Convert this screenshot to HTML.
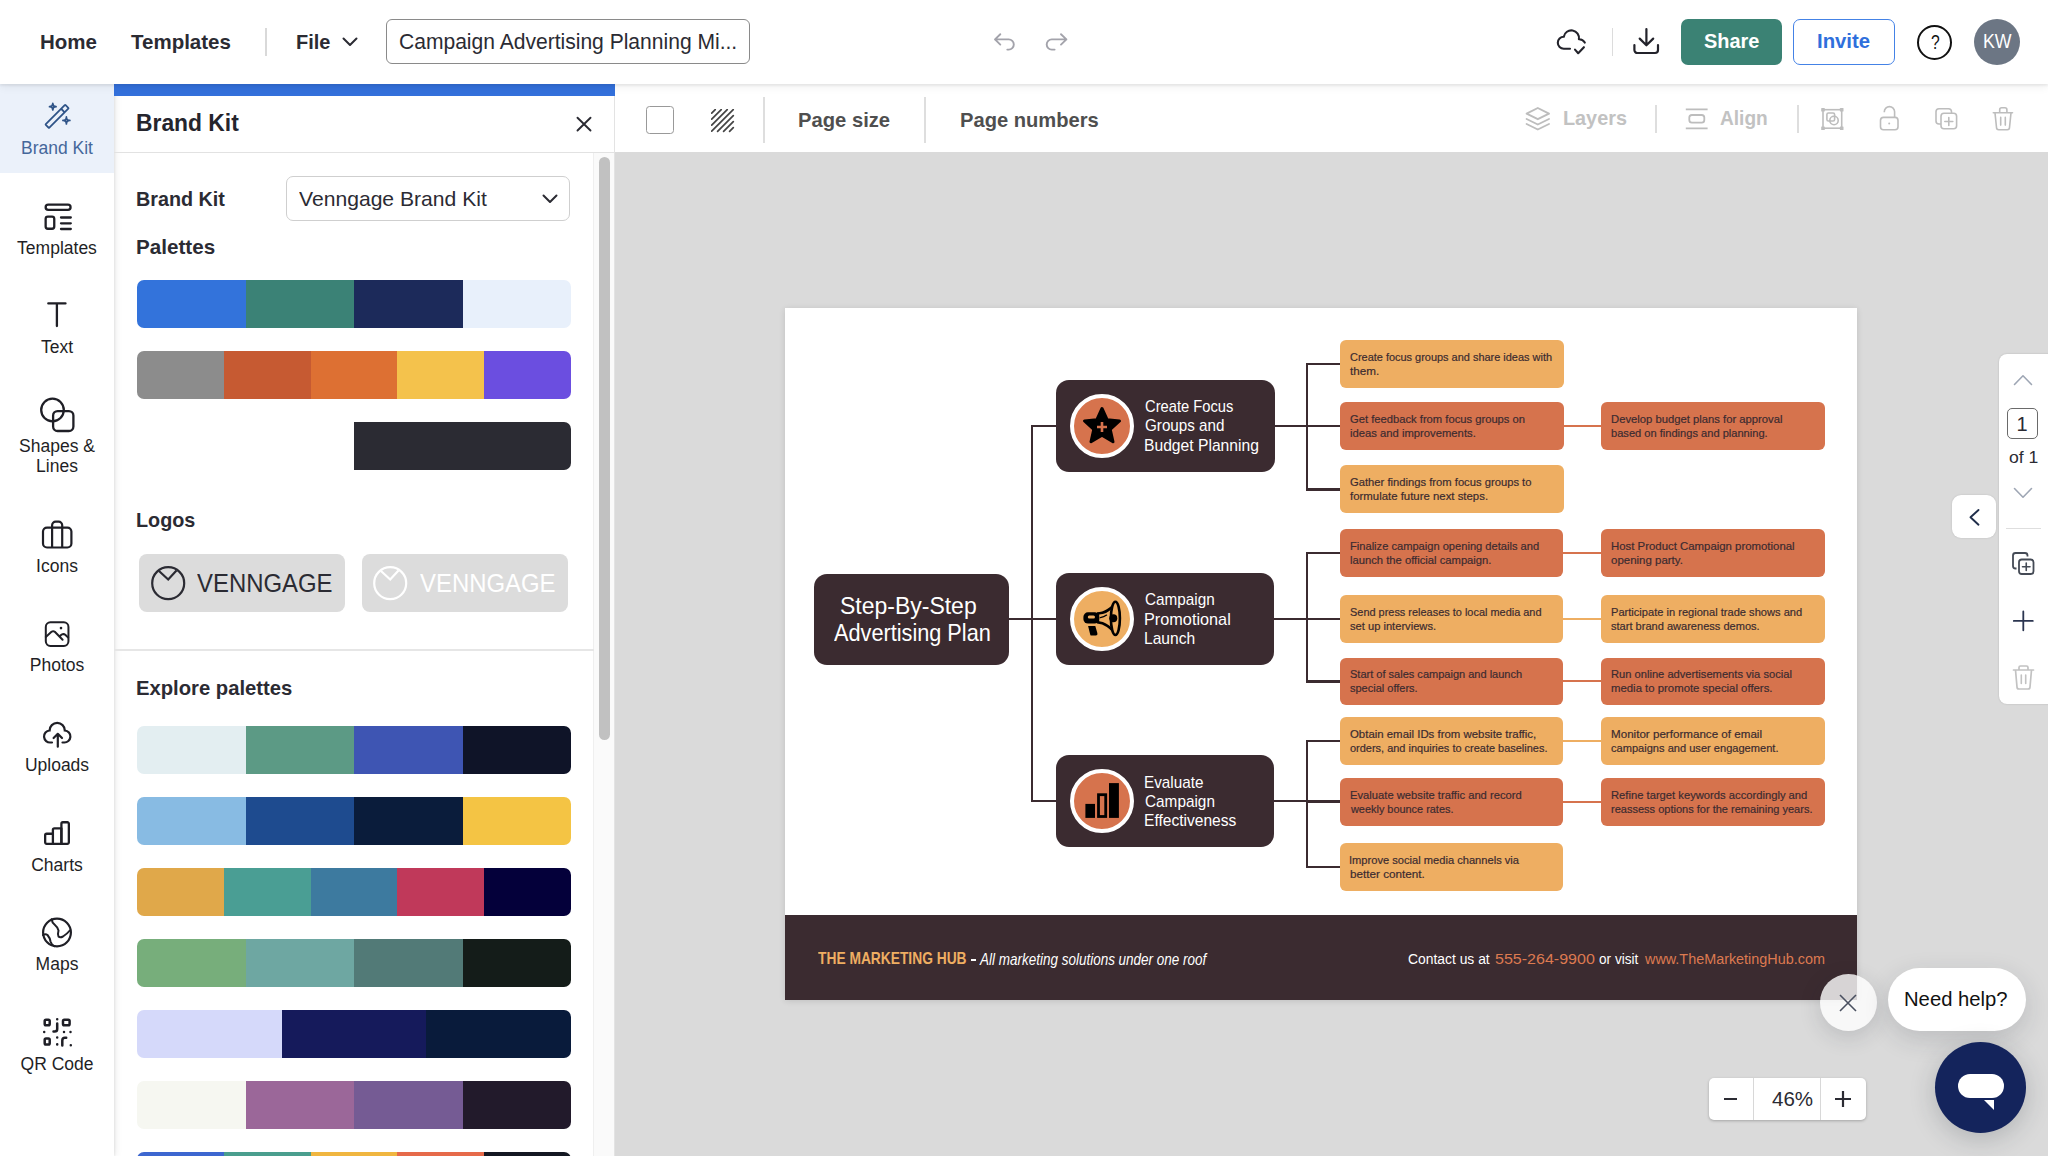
<!DOCTYPE html><html><head><meta charset="utf-8"><style>
html,body{margin:0;padding:0}
body{width:2048px;height:1156px;overflow:hidden;position:relative;background:#dadada;font-family:"Liberation Sans",sans-serif}
.a{position:absolute;box-sizing:border-box}
.t{position:absolute;white-space:nowrap}
</style></head><body>

<div class="a" style="left:0px;top:0px;width:2048px;height:84px;background:#fff;box-shadow:0 1.5px 2px rgba(0,0,0,0.06), 0 3px 9px rgba(0,0,0,0.06);z-index:5"></div>
<div class="a" style="left:0;top:0;width:2048px;height:84px;z-index:6">
<div class="t " style="left:40.0px;top:31.8px;font-size:20.5px;line-height:20.5px;color:#2b2b33;font-weight:700;font-style:normal;">Home</div>
<div class="t " style="left:131.0px;top:31.8px;font-size:20.5px;line-height:20.5px;color:#2b2b33;font-weight:700;font-style:normal;">Templates</div>
<div class="a" style="left:265px;top:28px;width:1.5px;height:28px;background:#d9d9d9;"></div>
<div class="t" style="left:296.03px;top:31.8px;font-size:20.5px;line-height:20.5px;color:#2b2b33;font-weight:700;font-style:normal;transform:scaleX(0.9731);transform-origin:0 0;">File</div>
<svg class="a" style="left:342px;top:37.3px;" width="16" height="10" viewBox="0 0 16 10" fill="none"><path d="M1.5 1.5 L8 8 L14.5 1.5" stroke="#2b2b33" stroke-width="2" stroke-linecap="round" stroke-linejoin="round"/></svg>
<div class="a" style="left:386px;top:19px;width:364px;height:45px;background:#fff;border:1.5px solid #8a8a8a;border-radius:6px"></div>
<div class="t" style="left:398.51px;top:31.4px;font-size:21.2px;line-height:21.2px;color:#2b2b33;font-weight:400;font-style:normal;transform:scaleX(0.9937);transform-origin:0 0;">Campaign Advertising Planning Mi...</div>
<svg class="a" style="left:985px;top:22px;" width="95" height="40" viewBox="0 0 95 40" fill="none"><path d="M15.3 12.2 L10 17.4 L15.3 22.6 M10 17.4 H23.7 A5.1 5.1 0 0 1 23.7 27.6 H22.3" stroke="#a3a3ab" stroke-width="1.9" stroke-linecap="round" stroke-linejoin="round" fill="none"/><path d="M76 12.2 L81.4 17.4 L76 22.6 M81.4 17.4 H66.8 A5.1 5.1 0 0 0 66.8 27.6 H69.6" stroke="#a3a3ab" stroke-width="1.9" stroke-linecap="round" stroke-linejoin="round" fill="none"/></svg>
<svg class="a" style="left:1548px;top:22px;" width="120" height="40" viewBox="0 0 120 40" fill="none"><path d="M22 26.7 H15.8 A6 6 0 0 1 15.8 14.7 A7.6 7.6 0 0 1 30.9 17.3 A6.6 6.6 0 0 1 36.8 20.6" stroke="#23232b" stroke-width="2.1" stroke-linecap="round" stroke-linejoin="round" fill="none"/><path d="M27 27.6 L30.2 31.2 L35.9 25.2" stroke="#23232b" stroke-width="2.1" stroke-linecap="round" stroke-linejoin="round" fill="none"/><path d="M98.4 7 V23 M91.7 16.6 L98.4 23.3 L105.2 16.6 M86.4 23 V28 a3 3 0 0 0 3 3 H107 a3 3 0 0 0 3 -3 V23" stroke="#23232b" stroke-width="2.2" stroke-linecap="round" stroke-linejoin="round" fill="none"/></svg>
<div class="a" style="left:1611.5px;top:28px;width:1.5px;height:28px;background:#dcdcdc;"></div>
<div class="a" style="left:1681px;top:19px;width:101px;height:45.5px;background:#3b8274;border-radius:7px"></div>
<div class="t" style="left:1704.00px;top:31.4px;font-size:20.5px;line-height:20.5px;color:#fff;font-weight:700;font-style:normal;transform:scaleX(0.9722);transform-origin:0 0;">Share</div>
<div class="a" style="left:1793px;top:19px;width:102px;height:45.5px;background:#fff;border:1.8px solid #4482e6;border-radius:7px"></div>
<div class="t" style="left:1817.31px;top:31.4px;font-size:20.5px;line-height:20.5px;color:#2f6fdc;font-weight:700;font-style:normal;transform:scaleX(0.9915);transform-origin:0 0;">Invite</div>
<div class="a" style="left:1917px;top:25px;width:35px;height:35px;background:transparent;border:2.5px solid #111;border-radius:50%"></div>
<div class="t" style="left:1930.70px;top:32.1px;font-size:20px;line-height:20px;color:#111;font-weight:400;font-style:normal;transform:scaleX(0.7818);transform-origin:0 0;">?</div>
<div class="a" style="left:1974px;top:19px;width:46px;height:46px;background:#6c7684;border-radius:50%"></div>
<div class="t" style="left:1982.79px;top:32.0px;font-size:19.4px;line-height:19.4px;color:#fff;font-weight:400;font-style:normal;transform:scaleX(0.9149);transform-origin:0 0;">KW</div>
</div>
<div class="a" style="left:0px;top:84px;width:114px;height:1072px;background:#fff;box-shadow:1px 0 2px rgba(0,0,0,0.07), 2px 0 7px rgba(0,0,0,0.07);z-index:3"></div>
<div class="a" style="left:0px;top:84px;width:114px;height:89px;background:#ebf1fa;z-index:3"></div>
<div class="a" style="left:0;top:84px;width:114px;height:1072px;z-index:4"></div>
<svg class="a" style="left:36px;top:96px;z-index:6" width="44" height="40" viewBox="0 0 44 40" fill="none"><g transform="translate(21.05,20.35) rotate(-45)"><rect x="-14" y="-2.5" width="28" height="5" rx="0.6" stroke="#2f5488" stroke-width="1.8"/><path d="M8.25 -2.5 V2.5" stroke="#2f5488" stroke-width="1.8"/></g><path d="M16.8 7.4 Q16.8 10.7 20.1 10.7 Q16.8 10.7 16.8 14 Q16.8 10.7 13.5 10.7 Q16.8 10.7 16.8 7.4 Z" stroke="#2f5488" stroke-width="1.7" stroke-linejoin="round" fill="none"/><path d="M30.4 20.9 Q30.4 24.4 33.9 24.4 Q30.4 24.4 30.4 27.9 Q30.4 24.4 26.9 24.4 Q30.4 24.4 30.4 20.9 Z" stroke="#2f5488" stroke-width="1.7" stroke-linejoin="round" fill="none"/></svg>
<div class="t" style="left:0;width:114px;text-align:center;top:139.6px;font-size:17.5px;line-height:17.5px;color:#45679a;z-index:6">Brand Kit</div>
<svg class="a" style="left:36px;top:196px;z-index:6" width="42" height="40" viewBox="0 0 42 40" fill="none"><rect x="9.65" y="8.65" width="24.9" height="5.3" rx="2.6" stroke="#1f1f26" stroke-width="2.3"/><rect x="9.65" y="20.55" width="8.6" height="12.2" rx="2.2" stroke="#1f1f26" stroke-width="2.3"/><path d="M25 21.5 H34.8 M25 27.3 H34.8 M25 33 H34.8" stroke="#1f1f26" stroke-width="2.3" stroke-linecap="round"/></svg>
<div class="t" style="left:0;width:114px;text-align:center;top:239.5px;font-size:17.5px;line-height:17.5px;color:#1f1f26;z-index:6">Templates</div>
<svg class="a" style="left:36px;top:296px;z-index:6" width="42" height="36" viewBox="0 0 42 36" fill="none"><path d="M12.3 7.4 H29.5 M20.9 7.4 V30" stroke="#1f1f26" stroke-width="2.3" stroke-linecap="round"/></svg>
<div class="t" style="left:0;width:114px;text-align:center;top:338.7px;font-size:17.5px;line-height:17.5px;color:#1f1f26;z-index:6">Text</div>
<svg class="a" style="left:36px;top:394px;z-index:6" width="42" height="42" viewBox="0 0 42 42" fill="none"><circle cx="16.5" cy="16" r="11.3" stroke="#1f1f26" stroke-width="2.3"/><rect x="17.1" y="17.1" width="20.3" height="19.9" rx="4.5" stroke="#1f1f26" stroke-width="2.3" fill="none"/></svg>
<div class="t" style="left:0;width:114px;text-align:center;top:438.4px;font-size:17.5px;line-height:17.5px;color:#1f1f26;z-index:6">Shapes &amp;</div>
<div class="t" style="left:0;width:114px;text-align:center;top:458.1px;font-size:17.5px;line-height:17.5px;color:#1f1f26;z-index:6">Lines</div>
<svg class="a" style="left:40px;top:519px;z-index:6" width="34" height="31" viewBox="0 0 34 31" fill="none"><rect x="3" y="8.6" width="28.4" height="19.9" rx="4" stroke="#1f1f26" stroke-width="2.2"/><path d="M12.1 28 V6.3 a3.6 3.6 0 0 1 3.6 -3.6 H18.6 a3.6 3.6 0 0 1 3.6 3.6 V28" stroke="#1f1f26" stroke-width="2.2" fill="none"/></svg>
<div class="t" style="left:0;width:114px;text-align:center;top:557.9px;font-size:17.5px;line-height:17.5px;color:#1f1f26;z-index:6">Icons</div>
<svg class="a" style="left:40px;top:616px;z-index:6" width="34" height="34" viewBox="0 0 34 34" fill="none"><rect x="5.8" y="6.35" width="22.65" height="23.6" rx="4.6" stroke="#1f1f26" stroke-width="2"/><path d="M5.8 20.9 L11.5 15.8 Q13.2 14.6 14.8 15.8 L22.6 23.8 M20 20 Q21.5 18.2 23.2 18.1 Q24.5 18.1 25.5 19 L28.2 21.6" stroke="#1f1f26" stroke-width="2" fill="none" stroke-linecap="round" stroke-linejoin="round"/><circle cx="21" cy="12.1" r="1.3" fill="#1f1f26"/></svg>
<div class="t" style="left:0;width:114px;text-align:center;top:657.2px;font-size:17.5px;line-height:17.5px;color:#1f1f26;z-index:6">Photos</div>
<svg class="a" style="left:36px;top:714px;z-index:6" width="42" height="40" viewBox="0 0 42 40" fill="none"><path d="M16 28.5 H14.5 A6 6 0 0 1 13.6 16.5 A7.6 7.6 0 0 1 28.8 16.5 A6 6 0 0 1 28 28.5 H26.5" stroke="#1f1f26" stroke-width="2.2" stroke-linecap="round" fill="none"/><path d="M21.8 32.7 V19.8 M17.6 24 L21.8 19.8 L26 24" stroke="#1f1f26" stroke-width="2.2" stroke-linecap="round" stroke-linejoin="round" fill="none"/></svg>
<div class="t" style="left:0;width:114px;text-align:center;top:757.2px;font-size:17.5px;line-height:17.5px;color:#1f1f26;z-index:6">Uploads</div>
<svg class="a" style="left:36px;top:814px;z-index:6" width="42" height="36" viewBox="0 0 42 36" fill="none"><g stroke="#1f1f26" stroke-width="2.3" fill="none" stroke-linejoin="round"><path d="M16.9 29.85 H10.65 a1.5 1.5 0 0 1 -1.5 -1.5 V21.25 a1.5 1.5 0 0 1 1.5 -1.5 H16.9"/><path d="M16.9 29.85 V15.85 a1.5 1.5 0 0 1 1.5 -1.5 H25.4 V29.85 Z"/><path d="M25.4 29.85 V9.75 a1.5 1.5 0 0 1 1.5 -1.5 H31.35 a1.5 1.5 0 0 1 1.5 1.5 V28.35 a1.5 1.5 0 0 1 -1.5 1.5 Z"/></g></svg>
<div class="t" style="left:0;width:114px;text-align:center;top:857.2px;font-size:17.5px;line-height:17.5px;color:#1f1f26;z-index:6">Charts</div>
<svg class="a" style="left:36px;top:912px;z-index:6" width="42" height="40" viewBox="0 0 42 40" fill="none"><circle cx="21" cy="20.5" r="13.9" stroke="#1f1f26" stroke-width="2.2"/><path d="M15.7 7.3 Q16 10.5 18.5 12.5 Q21.5 15 22.5 18.5 Q21.5 22 22.5 24.5 Q24 26 27 24.5 Q31 22 33.8 18.5 M7 23 Q9.5 21.5 11.5 23 Q14 26 14.5 29.5 Q15.5 33 18.5 34.3" stroke="#1f1f26" stroke-width="2" fill="none" stroke-linecap="round" stroke-linejoin="round"/></svg>
<div class="t" style="left:0;width:114px;text-align:center;top:956.2px;font-size:17.5px;line-height:17.5px;color:#1f1f26;z-index:6">Maps</div>
<svg class="a" style="left:36px;top:1012px;z-index:6" width="42" height="40" viewBox="0 0 42 40" fill="none"><g stroke="#1f1f26" stroke-width="2.5" fill="none" stroke-linecap="round"><rect x="8.7" y="7.7" width="5" height="5.6" rx="1.3"/><rect x="27" y="7.7" width="6.6" height="5.6" rx="1.3"/><rect x="8.7" y="26.5" width="5" height="6" rx="1.3"/><path d="M21.2 7.2 V7.3 M21.2 11.5 V17 Q21.2 19.6 18.6 19.6 H17.5 M8.2 20 V20.1 M28 20 V20.1 M34.5 20 V20.1 M21.2 25.5 V25.6 M21.2 32.3 V32.4 M26.3 33.5 V28.5 Q26.3 25.8 29 25.8 H30.2 M34.8 33.2 V33.3"/></g></svg>
<div class="t" style="left:0;width:114px;text-align:center;top:1055.9px;font-size:17.5px;line-height:17.5px;color:#1f1f26;z-index:6">QR Code</div>
<div class="a" style="left:114px;top:84px;width:501px;height:1072px;background:#fff;z-index:2;border-right:1px solid #e3e3e3"></div>
<div class="a" style="left:114px;top:84px;width:501px;height:12px;background:#3370db;z-index:3"></div>
<div class="a" style="left:114px;top:152px;width:501px;height:1px;background:#e2e2e2;z-index:3"></div>
<div class="a" style="left:593px;top:153px;width:1px;height:1003px;background:#efefef;z-index:3"></div>
<div class="a" style="left:594px;top:153px;width:20px;height:1003px;background:#fafafa;z-index:3"></div>
<div class="a" style="left:599px;top:157px;width:11px;height:583px;background:#c1c1c1;border-radius:6px;z-index:3"></div>
<div class="a" style="left:0;top:0;width:2048px;height:1156px;z-index:4">
<div class="t" style="left:136.03px;top:112.3px;font-size:23.5px;line-height:23.5px;color:#25252d;font-weight:700;font-style:normal;transform:scaleX(0.9721);transform-origin:0 0;">Brand Kit</div>
<svg class="a" style="left:575px;top:115px;" width="18" height="18" viewBox="0 0 18 18" fill="none"><path d="M2.5 2.7 L15.5 15.5 M15.5 2.7 L2.5 15.5" stroke="#2b2b33" stroke-width="1.9" stroke-linecap="round"/></svg>
<div class="t" style="left:136.04px;top:188.6px;font-size:20.5px;line-height:20.5px;color:#2b2b33;font-weight:700;font-style:normal;transform:scaleX(0.9626);transform-origin:0 0;">Brand Kit</div>
<div class="a" style="left:286px;top:176px;width:284px;height:45px;background:#fff;border:1.5px solid #cfcfcf;border-radius:7px"></div>
<div class="t" style="left:299.40px;top:188.2px;font-size:21px;line-height:21px;color:#2b2b33;font-weight:400;font-style:normal;transform:scaleX(1.0054);transform-origin:0 0;">Venngage Brand Kit</div>
<svg class="a" style="left:542px;top:193.7px;" width="16" height="11" viewBox="0 0 16 11" fill="none"><path d="M1.5 1.5 L8 8 L14.5 1.5" stroke="#2b2b33" stroke-width="2" stroke-linecap="round" stroke-linejoin="round"/></svg>
<div class="t" style="left:135.99px;top:237.3px;font-size:20.5px;line-height:20.5px;color:#2b2b33;font-weight:700;font-style:normal;transform:scaleX(1.0061);transform-origin:0 0;">Palettes</div>
<div class="a" style="left:137px;top:280px;width:434px;height:48px;border-radius:7px;overflow:hidden"><div style="position:absolute;left:0.0px;top:0;width:109.0px;height:48px;background:#3373db"></div><div style="position:absolute;left:108.5px;top:0;width:109.0px;height:48px;background:#3b8276"></div><div style="position:absolute;left:217.0px;top:0;width:109.0px;height:48px;background:#1c2a5a"></div><div style="position:absolute;left:325.5px;top:0;width:109.0px;height:48px;background:#e8f0fb"></div></div>
<div class="a" style="left:137px;top:351px;width:434px;height:48px;border-radius:7px;overflow:hidden"><div style="position:absolute;left:0.0px;top:0;width:87.3px;height:48px;background:#8c8c8c"></div><div style="position:absolute;left:86.8px;top:0;width:87.3px;height:48px;background:#c65a32"></div><div style="position:absolute;left:173.6px;top:0;width:87.3px;height:48px;background:#dd7033"></div><div style="position:absolute;left:260.4px;top:0;width:87.3px;height:48px;background:#f4c24c"></div><div style="position:absolute;left:347.2px;top:0;width:87.3px;height:48px;background:#6b4ee0"></div></div>
<div class="a" style="left:137px;top:422px;width:434px;height:48px;border-radius:7px;overflow:hidden"><div style="position:absolute;left:0.0px;top:0;width:109.0px;height:48px;background:rgba(0,0,0,0)"></div><div style="position:absolute;left:108.5px;top:0;width:109.0px;height:48px;background:rgba(0,0,0,0)"></div><div style="position:absolute;left:217.0px;top:0;width:109.0px;height:48px;background:#2b2b33"></div><div style="position:absolute;left:325.5px;top:0;width:109.0px;height:48px;background:#2b2b33"></div></div>
<div class="t" style="left:136.03px;top:509.6px;font-size:20.5px;line-height:20.5px;color:#2b2b33;font-weight:700;font-style:normal;transform:scaleX(0.9652);transform-origin:0 0;">Logos</div>
<div class="a" style="left:139px;top:554px;width:206px;height:58px;background:#dcdcdc;border-radius:8px"></div>
<div class="a" style="left:362px;top:554px;width:206px;height:58px;background:#dcdcdc;border-radius:8px"></div>
<svg class="a" style="left:151px;top:566px;" width="35" height="35" viewBox="0 0 35 35" fill="none"><circle cx="17.2" cy="17.2" r="16" stroke="#2b2b33" stroke-width="2.2"/><path d="M8 5 L17.2 13.5 L25.5 4.5" stroke="#2b2b33" stroke-width="2.2" fill="none"/></svg>
<div class="t" style="left:197.40px;top:569.9px;font-size:26.5px;line-height:26.5px;color:#2b2b33;font-weight:400;font-style:normal;transform:scaleX(0.9022);transform-origin:0 0;">VENNGAGE</div>
<svg class="a" style="left:373px;top:566px;" width="35" height="35" viewBox="0 0 35 35" fill="none"><circle cx="17.2" cy="17.2" r="16" stroke="#fff" stroke-width="2.2"/><path d="M8 5 L17.2 13.5 L25.5 4.5" stroke="#fff" stroke-width="2.2" fill="none"/></svg>
<div class="t" style="left:420.40px;top:569.9px;font-size:26.5px;line-height:26.5px;color:#fff;font-weight:400;font-style:normal;transform:scaleX(0.9022);transform-origin:0 0;">VENNGAGE</div>
<div class="a" style="left:114px;top:649px;width:480px;height:1.5px;background:#e6e6e6;"></div>
<div class="t" style="left:136.01px;top:678.2px;font-size:20.5px;line-height:20.5px;color:#2b2b33;font-weight:700;font-style:normal;transform:scaleX(0.9869);transform-origin:0 0;">Explore palettes</div>
<div class="a" style="left:137px;top:726px;width:434px;height:48px;border-radius:7px;overflow:hidden"><div style="position:absolute;left:0.0px;top:0;width:109.0px;height:48px;background:#e3eef1"></div><div style="position:absolute;left:108.5px;top:0;width:109.0px;height:48px;background:#5c9a85"></div><div style="position:absolute;left:217.0px;top:0;width:109.0px;height:48px;background:#3e55b3"></div><div style="position:absolute;left:325.5px;top:0;width:109.0px;height:48px;background:#0f1428"></div></div>
<div class="a" style="left:137px;top:797px;width:434px;height:48px;border-radius:7px;overflow:hidden"><div style="position:absolute;left:0.0px;top:0;width:109.0px;height:48px;background:#88bbe3"></div><div style="position:absolute;left:108.5px;top:0;width:109.0px;height:48px;background:#1e4b8f"></div><div style="position:absolute;left:217.0px;top:0;width:109.0px;height:48px;background:#0a1c3b"></div><div style="position:absolute;left:325.5px;top:0;width:109.0px;height:48px;background:#f4c444"></div></div>
<div class="a" style="left:137px;top:868px;width:434px;height:48px;border-radius:7px;overflow:hidden"><div style="position:absolute;left:0.0px;top:0;width:87.3px;height:48px;background:#e0a84a"></div><div style="position:absolute;left:86.8px;top:0;width:87.3px;height:48px;background:#4a9e94"></div><div style="position:absolute;left:173.6px;top:0;width:87.3px;height:48px;background:#3d7a9f"></div><div style="position:absolute;left:260.4px;top:0;width:87.3px;height:48px;background:#c0395a"></div><div style="position:absolute;left:347.2px;top:0;width:87.3px;height:48px;background:#04003a"></div></div>
<div class="a" style="left:137px;top:939px;width:434px;height:48px;border-radius:7px;overflow:hidden"><div style="position:absolute;left:0.0px;top:0;width:109.0px;height:48px;background:#77ae7b"></div><div style="position:absolute;left:108.5px;top:0;width:109.0px;height:48px;background:#6ea7a2"></div><div style="position:absolute;left:217.0px;top:0;width:109.0px;height:48px;background:#527a77"></div><div style="position:absolute;left:325.5px;top:0;width:109.0px;height:48px;background:#141c19"></div></div>
<div class="a" style="left:137px;top:1010px;width:434px;height:48px;border-radius:7px;overflow:hidden"><div style="position:absolute;left:0.0px;top:0;width:145.2px;height:48px;background:#d5d9fa"></div><div style="position:absolute;left:144.7px;top:0;width:145.2px;height:48px;background:#151a5b"></div><div style="position:absolute;left:289.3px;top:0;width:145.2px;height:48px;background:#091b3b"></div></div>
<div class="a" style="left:137px;top:1081px;width:434px;height:48px;border-radius:7px;overflow:hidden"><div style="position:absolute;left:0.0px;top:0;width:109.0px;height:48px;background:#f6f7f1"></div><div style="position:absolute;left:108.5px;top:0;width:109.0px;height:48px;background:#9b6799"></div><div style="position:absolute;left:217.0px;top:0;width:109.0px;height:48px;background:#755b94"></div><div style="position:absolute;left:325.5px;top:0;width:109.0px;height:48px;background:#221a2b"></div></div>
<div class="a" style="left:137px;top:1152px;width:434px;height:48px;border-radius:7px;overflow:hidden"><div style="position:absolute;left:0.0px;top:0;width:87.3px;height:48px;background:#3d67d0"></div><div style="position:absolute;left:86.8px;top:0;width:87.3px;height:48px;background:#4a9e8e"></div><div style="position:absolute;left:173.6px;top:0;width:87.3px;height:48px;background:#f0b640"></div><div style="position:absolute;left:260.4px;top:0;width:87.3px;height:48px;background:#e66a4a"></div><div style="position:absolute;left:347.2px;top:0;width:87.3px;height:48px;background:#141822"></div></div>
</div>
<div class="a" style="left:615px;top:84px;width:1433px;height:68px;background:#fff;z-index:2"></div>
<div class="a" style="left:0;top:0;width:2048px;height:1156px;z-index:4;pointer-events:none">
<div class="a" style="left:646px;top:106px;width:28px;height:28px;background:#fff;border:1.6px solid #999;border-radius:3.5px"></div>
<svg class="a" style="left:711px;top:108.5px;" width="24" height="24" viewBox="0 0 24 24" fill="none"><path d="M0.7 4.2 L4.2 0.7 M0.7 10.2 L10.2 0.7 M0.7 16.2 L16.2 0.7 M0.7 22.2 L22.2 0.7 M6.6 22.3 L22.3 6.6 M12.6 22.3 L22.3 12.6 M18.6 22.3 L22.3 18.6" stroke="#444" stroke-width="1.7" stroke-linecap="round"/></svg>
<div class="a" style="left:763px;top:97px;width:1.5px;height:46px;background:#dedede;"></div>
<div class="t" style="left:798.04px;top:109.4px;font-size:21px;line-height:21px;color:#4f4f4f;font-weight:700;font-style:normal;transform:scaleX(0.9623);transform-origin:0 0;">Page size</div>
<div class="a" style="left:924px;top:97px;width:1.5px;height:46px;background:#dedede;"></div>
<div class="t" style="left:959.64px;top:109.4px;font-size:21px;line-height:21px;color:#4f4f4f;font-weight:700;font-style:normal;transform:scaleX(0.9592);transform-origin:0 0;">Page numbers</div>
<svg class="a" style="left:1524px;top:105px;" width="28" height="27" viewBox="0 0 28 27" fill="none"><path d="M13.8 3 L25 8.7 L13.8 14.2 L2.6 8.7 Z" stroke="#bdbdbd" stroke-width="1.9" stroke-linejoin="round"/><path d="M2.6 14 L13.8 19.5 L25 14 M2.6 19 L13.8 24.5 L25 19" stroke="#bdbdbd" stroke-width="1.9" stroke-linejoin="round" stroke-linecap="round"/></svg>
<div class="t" style="left:1562.54px;top:108.2px;font-size:20.6px;line-height:20.6px;color:#c2c2c2;font-weight:700;font-style:normal;transform:scaleX(0.9622);transform-origin:0 0;">Layers</div>
<div class="a" style="left:1655px;top:105px;width:1.5px;height:28px;background:#dedede;"></div>
<svg class="a" style="left:1685px;top:106px;" width="24" height="25" viewBox="0 0 24 25" fill="none"><path d="M1.7 3.4 H21.7 M1.7 22.4 H21.7" stroke="#bdbdbd" stroke-width="1.8" stroke-linecap="square"/><rect x="4.3" y="9" width="15" height="7.6" rx="2.6" stroke="#bdbdbd" stroke-width="1.8"/></svg>
<div class="t" style="left:1720.10px;top:108.2px;font-size:20.6px;line-height:20.6px;color:#c2c2c2;font-weight:700;font-style:normal;transform:scaleX(0.9274);transform-origin:0 0;">Align</div>
<div class="a" style="left:1797px;top:105px;width:1.5px;height:28px;background:#dedede;"></div>
<svg class="a" style="left:1812px;top:100px;" width="210" height="38" viewBox="0 0 210 38" fill="none"><g stroke="#bdbdbd" stroke-width="1.6" fill="none"><rect x="11" y="9.7" width="18.7" height="18.5"/><rect x="14.9" y="13" width="7.7" height="8" rx="1.5"/><circle cx="22" cy="20.5" r="4.2"/><rect x="68.5" y="17.4" width="17.5" height="12.3" rx="3"/><path d="M72.3 12.3 V11.8 A5.15 5.15 0 0 1 82.6 11.8 V17.4"/><path d="M129 24 H127 a3 3 0 0 1 -3 -3 V11.7 a3 3 0 0 1 3 -3 H136.5 a3 3 0 0 1 3 3 V13.3"/><rect x="129" y="13.3" width="15.6" height="15.4" rx="3"/><path d="M136.8 17.5 V25.5 M132.8 21.5 H140.8" stroke-linecap="round"/><path d="M181.3 12.8 H200.5" stroke-linecap="round"/><path d="M187.7 12.8 V9.7 a2 2 0 0 1 2 -2 H192.9 a2 2 0 0 1 2 2 V12.8"/><path d="M183 12.8 L184.5 27.5 a2.2 2.2 0 0 0 2.2 2.2 H195.3 a2.2 2.2 0 0 0 2.2 -2.2 L199 12.8"/><path d="M188.7 17.4 V25.1 M193.3 17.4 V25.1" stroke-linecap="round"/></g><g fill="#bdbdbd"><rect x="9.2" y="7.9" width="3.6" height="3.6" rx="0.6"/><rect x="27.9" y="7.9" width="3.6" height="3.6" rx="0.6"/><rect x="9.2" y="26.4" width="3.6" height="3.6" rx="0.6"/><rect x="27.9" y="26.4" width="3.6" height="3.6" rx="0.6"/><circle cx="77.2" cy="23.6" r="1"/></g></svg>
</div>
<div class="a" style="left:0;top:0;width:2048px;height:1156px;z-index:1">
<div class="a" style="left:785px;top:308px;width:1072px;height:692px;background:#fff;box-shadow:0 1px 6px rgba(0,0,0,0.12)"></div>
<div class="a" style="left:785px;top:915px;width:1072px;height:85px;background:#3b2b30;"></div>
<div class="a" style="left:1008px;top:617.75px;width:48px;height:2.5px;background:#3b2b30;"></div>
<div class="a" style="left:1030.75px;top:424.75px;width:2.5px;height:377.5px;background:#3b2b30;"></div>
<div class="a" style="left:1032px;top:424.75px;width:24px;height:2.5px;background:#3b2b30;"></div>
<div class="a" style="left:1032px;top:799.75px;width:24px;height:2.5px;background:#3b2b30;"></div>
<div class="a" style="left:1272px;top:424.75px;width:69px;height:2.5px;background:#3b2b30;"></div>
<div class="a" style="left:1272px;top:617.75px;width:69px;height:2.5px;background:#3b2b30;"></div>
<div class="a" style="left:1272px;top:799.75px;width:69px;height:2.5px;background:#3b2b30;"></div>
<div class="a" style="left:1305.75px;top:362.65px;width:2.5px;height:127.89999999999998px;background:#3b2b30;"></div>
<div class="a" style="left:1307px;top:362.65px;width:34px;height:2.5px;background:#3b2b30;"></div>
<div class="a" style="left:1339.5px;top:340px;width:224.3px;height:47.8px;background:#eeae62;border-radius:6px"></div>
<div class="t" style="left:1349.60px;top:351.6px;font-size:11.8px;line-height:11.8px;color:#3b2b30;font-weight:400;font-style:normal;transform:scaleX(0.9279);transform-origin:0 0;-webkit-text-stroke:0.2px #3b2b30">Create focus groups and share ideas with</div>
<div class="t" style="left:1349.60px;top:365.6px;font-size:11.8px;line-height:11.8px;color:#3b2b30;font-weight:400;font-style:normal;transform:scaleX(0.9888);transform-origin:0 0;-webkit-text-stroke:0.2px #3b2b30">them.</div>
<div class="a" style="left:1307px;top:424.65px;width:34px;height:2.5px;background:#3b2b30;"></div>
<div class="a" style="left:1339.5px;top:402px;width:224.3px;height:47.8px;background:#d6734d;border-radius:6px"></div>
<div class="t" style="left:1349.60px;top:413.6px;font-size:11.8px;line-height:11.8px;color:#3b2b30;font-weight:400;font-style:normal;transform:scaleX(0.9499);transform-origin:0 0;-webkit-text-stroke:0.2px #3b2b30">Get feedback from focus groups on</div>
<div class="t" style="left:1349.60px;top:427.6px;font-size:11.8px;line-height:11.8px;color:#3b2b30;font-weight:400;font-style:normal;transform:scaleX(0.9542);transform-origin:0 0;-webkit-text-stroke:0.2px #3b2b30">ideas and improvements.</div>
<div class="a" style="left:1562px;top:424.79999999999995px;width:40px;height:2.2px;background:#d6734d;"></div>
<div class="a" style="left:1600.5px;top:402px;width:224px;height:47.8px;background:#d6734d;border-radius:6px"></div>
<div class="t" style="left:1610.60px;top:413.6px;font-size:11.8px;line-height:11.8px;color:#3b2b30;font-weight:400;font-style:normal;transform:scaleX(0.9544);transform-origin:0 0;-webkit-text-stroke:0.2px #3b2b30">Develop budget plans for approval</div>
<div class="t" style="left:1610.60px;top:427.6px;font-size:11.8px;line-height:11.8px;color:#3b2b30;font-weight:400;font-style:normal;transform:scaleX(0.9403);transform-origin:0 0;-webkit-text-stroke:0.2px #3b2b30">based on findings and planning.</div>
<div class="a" style="left:1307px;top:488.04999999999995px;width:34px;height:2.5px;background:#3b2b30;"></div>
<div class="a" style="left:1339.5px;top:465.4px;width:224.3px;height:47.8px;background:#eeae62;border-radius:6px"></div>
<div class="t" style="left:1349.60px;top:477.0px;font-size:11.8px;line-height:11.8px;color:#3b2b30;font-weight:400;font-style:normal;transform:scaleX(0.9511);transform-origin:0 0;-webkit-text-stroke:0.2px #3b2b30">Gather findings from focus groups to</div>
<div class="t" style="left:1349.60px;top:491.0px;font-size:11.8px;line-height:11.8px;color:#3b2b30;font-weight:400;font-style:normal;transform:scaleX(0.9659);transform-origin:0 0;-webkit-text-stroke:0.2px #3b2b30">formulate future next steps.</div>
<div class="a" style="left:1305.75px;top:551.65px;width:2.5px;height:131.0px;background:#3b2b30;"></div>
<div class="a" style="left:1307px;top:551.65px;width:34px;height:2.5px;background:#3b2b30;"></div>
<div class="a" style="left:1339.5px;top:529px;width:223.3px;height:47.8px;background:#d6734d;border-radius:6px"></div>
<div class="t" style="left:1349.60px;top:540.6px;font-size:11.8px;line-height:11.8px;color:#3b2b30;font-weight:400;font-style:normal;transform:scaleX(0.9424);transform-origin:0 0;-webkit-text-stroke:0.2px #3b2b30">Finalize campaign opening details and</div>
<div class="t" style="left:1349.60px;top:554.6px;font-size:11.8px;line-height:11.8px;color:#3b2b30;font-weight:400;font-style:normal;transform:scaleX(0.9517);transform-origin:0 0;-webkit-text-stroke:0.2px #3b2b30">launch the official campaign.</div>
<div class="a" style="left:1562px;top:551.8px;width:40px;height:2.2px;background:#d6734d;"></div>
<div class="a" style="left:1600.5px;top:529px;width:224px;height:47.8px;background:#d6734d;border-radius:6px"></div>
<div class="t" style="left:1610.60px;top:540.6px;font-size:11.8px;line-height:11.8px;color:#3b2b30;font-weight:400;font-style:normal;transform:scaleX(0.9655);transform-origin:0 0;-webkit-text-stroke:0.2px #3b2b30">Host Product Campaign promotional</div>
<div class="t" style="left:1610.60px;top:554.6px;font-size:11.8px;line-height:11.8px;color:#3b2b30;font-weight:400;font-style:normal;transform:scaleX(0.9726);transform-origin:0 0;-webkit-text-stroke:0.2px #3b2b30">opening party.</div>
<div class="a" style="left:1307px;top:617.65px;width:34px;height:2.5px;background:#3b2b30;"></div>
<div class="a" style="left:1339.5px;top:595px;width:223.3px;height:47.8px;background:#eeae62;border-radius:6px"></div>
<div class="t" style="left:1349.60px;top:606.6px;font-size:11.8px;line-height:11.8px;color:#3b2b30;font-weight:400;font-style:normal;transform:scaleX(0.9272);transform-origin:0 0;-webkit-text-stroke:0.2px #3b2b30">Send press releases to local media and</div>
<div class="t" style="left:1349.60px;top:620.6px;font-size:11.8px;line-height:11.8px;color:#3b2b30;font-weight:400;font-style:normal;transform:scaleX(0.9443);transform-origin:0 0;-webkit-text-stroke:0.2px #3b2b30">set up interviews.</div>
<div class="a" style="left:1562px;top:617.8px;width:40px;height:2.2px;background:#eeae62;"></div>
<div class="a" style="left:1600.5px;top:595px;width:224px;height:47.8px;background:#eeae62;border-radius:6px"></div>
<div class="t" style="left:1610.60px;top:606.6px;font-size:11.8px;line-height:11.8px;color:#3b2b30;font-weight:400;font-style:normal;transform:scaleX(0.9402);transform-origin:0 0;-webkit-text-stroke:0.2px #3b2b30">Participate in regional trade shows and</div>
<div class="t" style="left:1610.60px;top:620.6px;font-size:11.8px;line-height:11.8px;color:#3b2b30;font-weight:400;font-style:normal;transform:scaleX(0.9368);transform-origin:0 0;-webkit-text-stroke:0.2px #3b2b30">start brand awareness demos.</div>
<div class="a" style="left:1307px;top:680.15px;width:34px;height:2.5px;background:#3b2b30;"></div>
<div class="a" style="left:1339.5px;top:657.5px;width:223.3px;height:47.8px;background:#d6734d;border-radius:6px"></div>
<div class="t" style="left:1349.60px;top:669.1px;font-size:11.8px;line-height:11.8px;color:#3b2b30;font-weight:400;font-style:normal;transform:scaleX(0.9341);transform-origin:0 0;-webkit-text-stroke:0.2px #3b2b30">Start of sales campaign and launch</div>
<div class="t" style="left:1349.60px;top:683.1px;font-size:11.8px;line-height:11.8px;color:#3b2b30;font-weight:400;font-style:normal;transform:scaleX(0.9324);transform-origin:0 0;-webkit-text-stroke:0.2px #3b2b30">special offers.</div>
<div class="a" style="left:1562px;top:680.3px;width:40px;height:2.2px;background:#d6734d;"></div>
<div class="a" style="left:1600.5px;top:657.5px;width:224px;height:47.8px;background:#d6734d;border-radius:6px"></div>
<div class="t" style="left:1610.60px;top:669.1px;font-size:11.8px;line-height:11.8px;color:#3b2b30;font-weight:400;font-style:normal;transform:scaleX(0.9447);transform-origin:0 0;-webkit-text-stroke:0.2px #3b2b30">Run online advertisements via social</div>
<div class="t" style="left:1610.60px;top:683.1px;font-size:11.8px;line-height:11.8px;color:#3b2b30;font-weight:400;font-style:normal;transform:scaleX(0.9632);transform-origin:0 0;-webkit-text-stroke:0.2px #3b2b30">media to promote special offers.</div>
<div class="a" style="left:1305.75px;top:739.9499999999999px;width:2.5px;height:128.30000000000007px;background:#3b2b30;"></div>
<div class="a" style="left:1307px;top:739.9499999999999px;width:34px;height:2.5px;background:#3b2b30;"></div>
<div class="a" style="left:1339.5px;top:717.3px;width:223.3px;height:47.8px;background:#eeae62;border-radius:6px"></div>
<div class="t" style="left:1349.60px;top:728.9px;font-size:11.8px;line-height:11.8px;color:#3b2b30;font-weight:400;font-style:normal;transform:scaleX(0.9670);transform-origin:0 0;-webkit-text-stroke:0.2px #3b2b30">Obtain email IDs from website traffic,</div>
<div class="t" style="left:1349.60px;top:742.9px;font-size:11.8px;line-height:11.8px;color:#3b2b30;font-weight:400;font-style:normal;transform:scaleX(0.9294);transform-origin:0 0;-webkit-text-stroke:0.2px #3b2b30">orders, and inquiries to create baselines.</div>
<div class="a" style="left:1562px;top:740.0999999999999px;width:40px;height:2.2px;background:#eeae62;"></div>
<div class="a" style="left:1600.5px;top:717.3px;width:224px;height:47.8px;background:#eeae62;border-radius:6px"></div>
<div class="t" style="left:1610.60px;top:728.9px;font-size:11.8px;line-height:11.8px;color:#3b2b30;font-weight:400;font-style:normal;transform:scaleX(0.9843);transform-origin:0 0;-webkit-text-stroke:0.2px #3b2b30">Monitor performance of email</div>
<div class="t" style="left:1610.60px;top:742.9px;font-size:11.8px;line-height:11.8px;color:#3b2b30;font-weight:400;font-style:normal;transform:scaleX(0.9388);transform-origin:0 0;-webkit-text-stroke:0.2px #3b2b30">campaigns and user engagement.</div>
<div class="a" style="left:1307px;top:800.65px;width:34px;height:2.5px;background:#3b2b30;"></div>
<div class="a" style="left:1339.5px;top:778px;width:223.3px;height:47.8px;background:#d6734d;border-radius:6px"></div>
<div class="t" style="left:1349.60px;top:789.6px;font-size:11.8px;line-height:11.8px;color:#3b2b30;font-weight:400;font-style:normal;transform:scaleX(0.9500);transform-origin:0 0;-webkit-text-stroke:0.2px #3b2b30">Evaluate website traffic and record</div>
<div class="t" style="left:1350.52px;top:803.6px;font-size:11.8px;line-height:11.8px;color:#3b2b30;font-weight:400;font-style:normal;transform:scaleX(0.9243);transform-origin:0 0;-webkit-text-stroke:0.2px #3b2b30">weekly bounce rates.</div>
<div class="a" style="left:1562px;top:800.8px;width:40px;height:2.2px;background:#d6734d;"></div>
<div class="a" style="left:1600.5px;top:778px;width:224px;height:47.8px;background:#d6734d;border-radius:6px"></div>
<div class="t" style="left:1610.60px;top:789.6px;font-size:11.8px;line-height:11.8px;color:#3b2b30;font-weight:400;font-style:normal;transform:scaleX(0.9505);transform-origin:0 0;-webkit-text-stroke:0.2px #3b2b30">Refine target keywords accordingly and</div>
<div class="t" style="left:1610.60px;top:803.6px;font-size:11.8px;line-height:11.8px;color:#3b2b30;font-weight:400;font-style:normal;transform:scaleX(0.9339);transform-origin:0 0;-webkit-text-stroke:0.2px #3b2b30">reassess options for the remaining years.</div>
<div class="a" style="left:1307px;top:865.75px;width:34px;height:2.5px;background:#3b2b30;"></div>
<div class="a" style="left:1339.5px;top:843.1px;width:223.3px;height:47.8px;background:#eeae62;border-radius:6px"></div>
<div class="t" style="left:1348.66px;top:854.7px;font-size:11.8px;line-height:11.8px;color:#3b2b30;font-weight:400;font-style:normal;transform:scaleX(0.9429);transform-origin:0 0;-webkit-text-stroke:0.2px #3b2b30">Improve social media channels via</div>
<div class="t" style="left:1349.60px;top:868.7px;font-size:11.8px;line-height:11.8px;color:#3b2b30;font-weight:400;font-style:normal;transform:scaleX(0.9928);transform-origin:0 0;-webkit-text-stroke:0.2px #3b2b30">better content.</div>
<div class="a" style="left:814px;top:574px;width:195px;height:90.5px;background:#3b2b30;border-radius:13px"></div>
<div class="t" style="left:840.36px;top:593.7px;font-size:24.4px;line-height:24.4px;color:#fff;font-weight:400;font-style:normal;transform:scaleX(0.9422);transform-origin:0 0;">Step-By-Step</div>
<div class="t" style="left:833.60px;top:621.1px;font-size:24.4px;line-height:24.4px;color:#fff;font-weight:400;font-style:normal;transform:scaleX(0.8896);transform-origin:0 0;">Advertising Plan</div>
<div class="a" style="left:1055.5px;top:380px;width:219.5px;height:92px;background:#3b2b30;border-radius:13px"></div>
<div class="a" style="left:1069.8px;top:393.8px;width:64.4px;height:64.4px;background:#d6734d;border:4.6px solid #fff;border-radius:50%"></div>
<div class="t" style="left:1145.00px;top:398.9px;font-size:15.7px;line-height:15.7px;color:#fff;font-weight:400;font-style:normal;transform:scaleX(0.9383);transform-origin:0 0;">Create Focus</div>
<div class="t" style="left:1145.00px;top:418.3px;font-size:15.7px;line-height:15.7px;color:#fff;font-weight:400;font-style:normal;transform:scaleX(0.9698);transform-origin:0 0;">Groups and</div>
<div class="t" style="left:1144.00px;top:437.6px;font-size:15.7px;line-height:15.7px;color:#fff;font-weight:400;font-style:normal;transform:scaleX(0.9981);transform-origin:0 0;">Budget Planning</div>
<div class="a" style="left:1055.5px;top:573px;width:218.5px;height:92px;background:#3b2b30;border-radius:13px"></div>
<div class="a" style="left:1069.8px;top:586.8px;width:64.4px;height:64.4px;background:#eeae62;border:4.6px solid #fff;border-radius:50%"></div>
<div class="t" style="left:1145.00px;top:592.1px;font-size:15.7px;line-height:15.7px;color:#fff;font-weight:400;font-style:normal;transform:scaleX(0.9763);transform-origin:0 0;">Campaign</div>
<div class="t" style="left:1143.96px;top:611.7px;font-size:15.7px;line-height:15.7px;color:#fff;font-weight:400;font-style:normal;transform:scaleX(1.0362);transform-origin:0 0;">Promotional</div>
<div class="t" style="left:1144.01px;top:631.0px;font-size:15.7px;line-height:15.7px;color:#fff;font-weight:400;font-style:normal;transform:scaleX(0.9931);transform-origin:0 0;">Launch</div>
<div class="a" style="left:1055.5px;top:755.4px;width:218.5px;height:92px;background:#3b2b30;border-radius:13px"></div>
<div class="a" style="left:1069.8px;top:768.8px;width:64.4px;height:64.4px;background:#d6734d;border:4.6px solid #fff;border-radius:50%"></div>
<div class="t" style="left:1144.03px;top:774.6px;font-size:15.7px;line-height:15.7px;color:#fff;font-weight:400;font-style:normal;transform:scaleX(0.9731);transform-origin:0 0;">Evaluate</div>
<div class="t" style="left:1145.00px;top:794.0px;font-size:15.7px;line-height:15.7px;color:#fff;font-weight:400;font-style:normal;transform:scaleX(0.9777);transform-origin:0 0;">Campaign</div>
<div class="t" style="left:1144.01px;top:813.2px;font-size:15.7px;line-height:15.7px;color:#fff;font-weight:400;font-style:normal;transform:scaleX(0.9927);transform-origin:0 0;">Effectiveness</div>
<svg class="a" style="left:1082px;top:406px;" width="40" height="39" viewBox="0 0 40 39" fill="none"><path d="M20 2.5 L25.2 13.8 L37.5 15 L28.2 23.3 L31 35.8 L20 29.3 L9 35.8 L11.8 23.3 L2.5 15 L14.8 13.8 Z" fill="#000" stroke="#000" stroke-width="3" stroke-linejoin="round"/><path d="M20 16 V26 M15 21 H25" stroke="#d6734d" stroke-width="2.6"/></svg>
<svg class="a" style="left:1066px;top:583px;" width="72" height="72" viewBox="0 0 72 72" fill="none"><path d="M31 29.3 C38 29 44 25 49.4 18.4 L49.4 52.3 C44 45.6 38 41 31 40.5 Z" fill="#000"/><path d="M33.2 31.6 C38.5 31.2 42 29.2 45.5 26.2 L45.5 44.2 C42 41.4 38.5 39 33.2 38.3 Z" fill="#eeae62"/><rect x="17.4" y="29.3" width="15.8" height="11.2" rx="4.6" fill="#000"/><rect x="21.8" y="32.4" width="7.2" height="3.1" rx="1.5" fill="#eeae62"/><ellipse cx="49.4" cy="35.3" rx="4.5" ry="16.6" fill="#eeae62" stroke="#000" stroke-width="2.6"/><circle cx="47.3" cy="35.3" r="4" fill="#000"/><path d="M34.3 34.6 Q38 34.2 40.6 32.1" stroke="#000" stroke-width="1.3" fill="none" stroke-linecap="round"/><path d="M22.1 43 H29.3 L31.4 50.3 Q31.9 52.6 29.8 52.6 H25.6 Q24.4 52.6 24.2 51.4 Z" fill="#000"/></svg>
<svg class="a" style="left:1066px;top:765px;" width="72" height="72" viewBox="0 0 72 72" fill="none"><rect x="19.4" y="38.9" width="9.6" height="14" fill="#000"/><rect x="32.5" y="29.7" width="7.2" height="21.8" fill="none" stroke="#000" stroke-width="2.8"/><rect x="43" y="18.1" width="9.9" height="34.8" fill="#000"/></svg>
<div class="t" style="left:818.00px;top:950.9px;font-size:16.6px;line-height:16.6px;color:#eeae62;font-weight:700;font-style:normal;transform:scaleX(0.8308);transform-origin:0 0;">THE MARKETING HUB</div>
<div class="a" style="left:971px;top:958.8px;width:5.2px;height:1.8px;background:#fff;"></div>
<div class="t" style="left:980.33px;top:950.9px;font-size:16.2px;line-height:16.2px;color:#fff;font-weight:400;font-style:italic;transform:scaleX(0.8328);transform-origin:0 0;">All marketing solutions under one roof</div>
<div class="t" style="left:1407.60px;top:951.3px;font-size:15.2px;line-height:15.2px;color:#fff;font-weight:400;font-style:normal;transform:scaleX(0.9129);transform-origin:0 0;">Contact us at</div>
<div class="t" style="left:1495.00px;top:951.3px;font-size:15.2px;line-height:15.2px;color:#dd7a50;font-weight:400;font-style:normal;transform:scaleX(1.0559);transform-origin:0 0;">555-264-9900</div>
<div class="t" style="left:1598.50px;top:951.3px;font-size:15.2px;line-height:15.2px;color:#fff;font-weight:400;font-style:normal;transform:scaleX(0.8957);transform-origin:0 0;">or visit</div>
<div class="t" style="left:1644.75px;top:951.3px;font-size:15.2px;line-height:15.2px;color:#dd7a50;font-weight:400;font-style:normal;transform:scaleX(0.9471);transform-origin:0 0;">www.TheMarketingHub.com</div>
</div>
<div class="a" style="left:0;top:0;width:2048px;height:1156px;z-index:7">
<div class="a" style="left:1998.7px;top:354px;width:60px;height:349.5px;background:#fff;border-radius:8px;box-shadow:0 0 2px rgba(0,0,0,0.18)"></div>
<svg class="a" style="left:2013px;top:373px;" width="20" height="14" viewBox="0 0 20 14" fill="none"><path d="M1.5 11.5 L10 2.8 L18.5 11.5" stroke="#9ea6b4" stroke-width="1.6" fill="none" stroke-linecap="round" stroke-linejoin="round"/></svg>
<div class="a" style="left:2007.3px;top:408.3px;width:31.2px;height:30.8px;background:#fff;border:1.5px solid #6a6a6a;border-radius:5px"></div>
<div class="t" style="left:2016.50px;top:413.9px;font-size:20px;line-height:20px;color:#2b2b33;font-weight:400;font-style:normal;transform:scaleX(1.0000);transform-origin:0 0;">1</div>
<div class="t" style="left:2009.00px;top:449.2px;font-size:17.2px;line-height:17.2px;color:#2b2b33;font-weight:400;font-style:normal;transform:scaleX(1.0246);transform-origin:0 0;">of 1</div>
<svg class="a" style="left:2013px;top:486px;" width="20" height="14" viewBox="0 0 20 14" fill="none"><path d="M1.5 2.5 L10 11.2 L18.5 2.5" stroke="#9ea6b4" stroke-width="1.6" fill="none" stroke-linecap="round" stroke-linejoin="round"/></svg>
<div class="a" style="left:2006px;top:528px;width:35px;height:1.2px;background:#dedede;"></div>
<svg class="a" style="left:2011px;top:551px;" width="25" height="25" viewBox="0 0 25 25" fill="none"><path d="M5.5 17.5 H4.5 a2.5 2.5 0 0 1 -2.5 -2.5 V4.5 a2.5 2.5 0 0 1 2.5 -2.5 H14 a2.5 2.5 0 0 1 2.5 2.5 V5.5" stroke="#444a55" stroke-width="1.8" fill="none"/><rect x="8" y="8.5" width="14.5" height="14.5" rx="2.8" stroke="#444a55" stroke-width="1.8" fill="none"/><path d="M15.25 12 V19.5 M11.5 15.75 H19" stroke="#444a55" stroke-width="1.6" stroke-linecap="round"/></svg>
<svg class="a" style="left:2012px;top:610px;" width="22" height="22" viewBox="0 0 22 22" fill="none"><path d="M11.3 1.5 V20.3 M1.8 10.9 H20.8" stroke="#2b3550" stroke-width="1.8" stroke-linecap="round"/></svg>
<svg class="a" style="left:2011px;top:664px;" width="25" height="27" viewBox="0 0 25 27" fill="none"><path d="M2.5 6 H22.5 M8 6 V3.5 a1.5 1.5 0 0 1 1.5 -1.5 H15.5 a1.5 1.5 0 0 1 1.5 1.5 V6" stroke="#c2c2c2" stroke-width="1.7" stroke-linecap="round" fill="none"/><path d="M4.5 6 L6 23 a2 2 0 0 0 2 2 H17 a2 2 0 0 0 2 -2 L20.5 6" stroke="#c2c2c2" stroke-width="1.7" fill="none"/><path d="M10.3 11 V19.5 M14.7 11 V19.5" stroke="#c2c2c2" stroke-width="1.6" stroke-linecap="round"/></svg>
<div class="a" style="left:1952px;top:495px;width:44px;height:43px;background:#fff;border-radius:9px;box-shadow:0 0 2px rgba(0,0,0,0.15)"></div>
<svg class="a" style="left:1966px;top:507px;" width="16" height="20" viewBox="0 0 16 20" fill="none"><path d="M12.5 3 L4.5 10.3 L12.5 17.7" stroke="#1f2d4a" stroke-width="1.9" fill="none" stroke-linecap="round" stroke-linejoin="round"/></svg>
<div class="a" style="left:1708.5px;top:1078px;width:157px;height:42px;background:#fff;border-radius:5px;box-shadow:0 1px 3px rgba(0,0,0,0.25)"></div>
<div class="a" style="left:1752.5px;top:1078px;width:1px;height:42px;background:#d8d8d8;"></div>
<div class="a" style="left:1820px;top:1078px;width:1px;height:42px;background:#d8d8d8;"></div>
<div class="a" style="left:1723.5px;top:1098px;width:13px;height:2px;background:#2b2b33;"></div>
<div class="t" style="left:1772.00px;top:1089.1px;font-size:20px;line-height:20px;color:#2b2b33;font-weight:400;font-style:normal;transform:scaleX(1.0262);transform-origin:0 0;">46%</div>
<svg class="a" style="left:1834px;top:1090px;" width="18" height="18" viewBox="0 0 18 18" fill="none"><path d="M9 1 V17 M1 9 H17" stroke="#2b2b33" stroke-width="2.2"/></svg>
<div class="a" style="left:1820px;top:974px;width:57px;height:57px;background:rgba(255,255,255,0.80);border-radius:50%;box-shadow:0 6px 22px rgba(30,40,50,0.16)"></div>
<svg class="a" style="left:1838px;top:993px;" width="20" height="20" viewBox="0 0 20 20" fill="none"><path d="M2 2 L18 18 M18 2 L2 18" stroke="#4a5060" stroke-width="1.6"/></svg>
<div class="a" style="left:1888px;top:968px;width:138px;height:63px;background:#fff;border-radius:32px;box-shadow:0 8px 26px rgba(30,40,50,0.16)"></div>
<div class="t" style="left:1904.46px;top:989.8px;font-size:19.5px;line-height:19.5px;color:#111;font-weight:400;font-style:normal;transform:scaleX(1.0384);transform-origin:0 0;">Need help?</div>
<div class="a" style="left:1935px;top:1042px;width:91px;height:91px;background:#14245c;border-radius:50%;box-shadow:0 6px 26px rgba(30,40,50,0.22)"></div>
<div class="a" style="left:1957.5px;top:1074px;width:46.5px;height:23.5px;background:#fff;border-radius:12px"></div>
<svg class="a" style="left:1984px;top:1100px;" width="12" height="12" viewBox="0 0 12 12" fill="none"><path d="M0 0 H10 V10 Z" fill="#fff"/></svg>
</div>
</body></html>
